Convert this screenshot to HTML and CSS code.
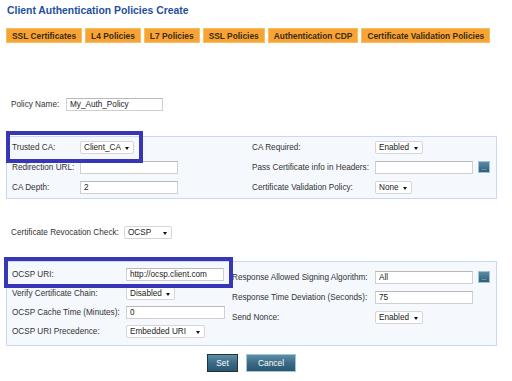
FILE: index.html
```html
<!DOCTYPE html>
<html>
<head>
<meta charset="utf-8">
<link rel="stylesheet" href="styles.css">
</head>
<body>
<div class="page">
  <h1 class="title">Client Authentication Policies Create</h1>
  <nav class="tabs">
    <span class="tab">SSL Certificates</span>
    <span class="tab">L4 Policies</span>
    <span class="tab">L7 Policies</span>
    <span class="tab">SSL Policies</span>
    <span class="tab">Authentication CDP</span>
    <span class="tab">Certificate Validation Policies</span>
  </nav>

  <div class="line policy">
    <span class="lbl">Policy Name:</span>
    <span class="input w97">My_Auth_Policy</span>
  </div>

  <section class="panel p1">
    <div class="grid g1">
      <span class="lbl">Trusted CA:</span>
      <span class="cell"><span class="select w54">Client_CA</span></span>
      <span class="lbl">CA Required:</span>
      <span class="cell"><span class="select w48">Enabled</span></span>

      <span class="lbl">Redirection URL:</span>
      <span class="cell"><span class="input w98"></span></span>
      <span class="lbl">Pass Certificate info in Headers:</span>
      <span class="cell"><span class="input w98"></span><span class="dots">...</span></span>

      <span class="lbl">CA Depth:</span>
      <span class="cell"><span class="input w98">2</span></span>
      <span class="lbl">Certificate Validation Policy:</span>
      <span class="cell"><span class="select w37">None</span></span>
    </div>
    <div class="mark m1"></div>
  </section>

  <div class="line revocation">
    <span class="lbl">Certificate Revocation Check:</span>
    <span class="select w48">OCSP</span>
  </div>

  <section class="panel p2">
    <div class="grid g2l">
      <span class="lbl">OCSP URI:</span>
      <span class="cell"><span class="input w98">http://ocsp.client.com</span></span>
      <span class="lbl">Verify Certificate Chain:</span>
      <span class="cell"><span class="select w49">Disabled</span></span>
      <span class="lbl">OCSP Cache Time (Minutes):</span>
      <span class="cell"><span class="input w99">0</span></span>
      <span class="lbl">OCSP URI Precedence:</span>
      <span class="cell"><span class="select w79">Embedded URI</span></span>
    </div>
    <div class="grid g2r">
      <span class="lbl">Response Allowed Signing Algorithm:</span>
      <span class="cell"><span class="input w98">All</span><span class="dots">...</span></span>
      <span class="lbl">Response Time Deviation (Seconds):</span>
      <span class="cell"><span class="input w98">75</span></span>
      <span class="lbl">Send Nonce:</span>
      <span class="cell"><span class="select w48">Enabled</span></span>
    </div>
    <div class="mark m2"></div>
  </section>

  <div class="actions">
    <span class="btn focus">Set</span>
    <span class="btn cancel">Cancel</span>
  </div>
</div>
</body>
</html>
```
FILE: styles.css
```css
* { box-sizing: border-box; }
html, body { margin: 0; padding: 0; background: #fff; }
body {
  font-family: "Liberation Sans", Arial, sans-serif;
  font-size: 8.2px;
  color: #333;
  width: 512px;
  height: 381px;
  overflow: hidden;
}
.page { padding: 4px 0 0 0; }

.title {
  margin: 0 0 0 7px;
  font-size: 10.4px;
  line-height: 13px;
  font-weight: bold;
  color: #1d4f9e;
}

.tabs {
  display: flex;
  gap: 3px;
  margin: 11px 0 0 6px;
  height: 15px;
}
.tab {
  display: flex;
  align-items: center;
  padding: 0 5px;
  background: #f7a434;
  border: 1px solid #fbbd62;
  font-weight: bold;
  font-size: 8.4px;
  color: #3a2b14;
  white-space: nowrap;
}

.line {
  display: flex;
  align-items: center;
  margin-left: 11px;
}
.policy { margin-top: 54px; height: 14px; }
.policy .lbl { width: 55px; }
.revocation { margin-top: 27px; height: 13px; }
.revocation .lbl { width: 113px; }

.lbl { white-space: nowrap; color: #333; }

.input, .select {
  display: inline-flex;
  align-items: center;
  height: 13px;
  background: #fff;
  color: #222;
  border: 1px solid #cfcfcf;
  border-top-color: #b9b9b9;
  padding-left: 3px;
  white-space: nowrap;
  overflow: hidden;
}
.select {
  position: relative;
  border: 1px solid #d6d6d6;
  border-radius: 2px;
  padding-left: 3px;
}
.select::after {
  content: "";
  position: absolute;
  right: 4px;
  top: 5px;
  border-left: 2.5px solid transparent;
  border-right: 2.5px solid transparent;
  border-top: 3px solid #111;
}
.w97 { width: 97px; }
.w98 { width: 98px; }
.w99 { width: 99px; }
.w54 { width: 54px; }
.w48 { width: 48px; }
.w49 { width: 49px; }
.w37 { width: 37px; }
.w79 { width: 79px; }

.dots {
  display: inline-flex;
  align-items: flex-end;
  justify-content: center;
  width: 12px;
  height: 12px;
  margin-left: 5px;
  background: linear-gradient(#5d8ba4, #2f5e78);
  border: 1px solid #9cc3da;
  color: #fff;
  font-size: 6px;
  line-height: 7px;
}

.panel {
  position: relative;
  margin-left: 6px;
  width: 491px;
  border: 1px solid #c9d8f2;
  background: #f5f8fd;
}
.p1 { margin-top: 25px; padding: 0 0 1px 5px; }
.p2 { margin-top: 22px; padding: 0 0 0 5px; display: flex; height: 85px; }

.grid { display: grid; align-items: center; }
.cell { display: flex; align-items: center; }
.g1 {
  grid-template-columns: 68px 172px 123px auto;
  grid-auto-rows: 20px;
}
.g2l {
  width: 220px;
  padding-top: 3px;
  grid-template-columns: 114px auto;
  grid-auto-rows: 19px;
  align-content: start;
}
.g2r {
  padding-top: 5px;
  grid-template-columns: 143px auto;
  grid-auto-rows: 20px;
  align-content: start;
}

.mark {
  position: absolute;
  border: 4px solid #3636b6;
}
.m1 { left: -1px; top: -6px; width: 137px; height: 32px; }
.m2 { left: -3px; top: -5px; width: 229px; height: 31px; }

.actions {
  display: flex;
  justify-content: center;
  gap: 8px;
  margin: 8px 0 0 6px;
  width: 491px;
}
.btn {
  display: flex;
  align-items: center;
  justify-content: center;
  height: 18px;
  background: linear-gradient(#5f8ea7, #3a6a84 50%, #2b5670);
  color: #fff;
  font-size: 8.4px;
  border: 1px solid #9cc7dd;
}
.btn.focus { width: 31px; border: 1px solid #1c3441; }
.btn.cancel { width: 50px; }
```
